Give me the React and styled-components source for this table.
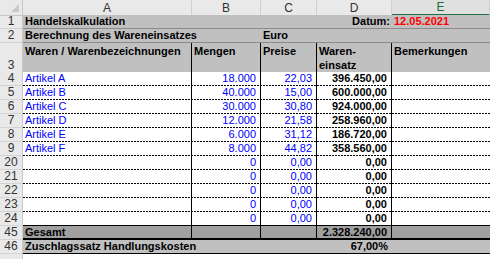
import React from 'react';
import styled, { createGlobalStyle } from 'styled-components';

const Global = createGlobalStyle`
  html, body { margin: 0; padding: 0; background: #fff; }
  body { font-family: "Liberation Sans", Arial, sans-serif; }
`

const COLS = '169px 69px 56px 75px 98px';

const Sheet = styled.div`
  display: flex;
  flex-direction: column;
  width: 490px;
  font-size: 11px;
  color: #000;
`
const HeadRow = styled.div`
  display: grid;
  grid-template-columns: 23px ${COLS};
  height: 15px;
  background: #e9e9e9;
`
const Corner = styled.div`
  position: relative;
  box-sizing: border-box;
  border-right: 1px solid #c8c8c8;
  border-bottom: 1px solid #c8c8c8;
  &::after {
    content: '';
    position: absolute;
    right: 3px;
    bottom: 3px;
    border-left: 8px solid transparent;
    border-bottom: 8px solid #c9c9c9;
  }
`
const ColHead = styled.div`
  box-sizing: border-box;
  display: flex;
  align-items: center;
  justify-content: center;
  font-size: 12px;
  color: ${p => p.$active ? '#1e6b41' : '#333'};
  background: ${p => p.$active ? '#e0e0e0' : 'transparent'};
  border-right: 1px solid #d0d0d0;
  border-bottom: ${p => p.$active ? '2px solid #217346' : '1px solid #c8c8c8'};
`
const Row = styled.div`
  display: grid;
  grid-template-columns: 23px 467px;
  height: ${p => p.$h || 14}px;
  overflow: hidden;
`
const RowNum = styled.div`
  box-sizing: border-box;
  display: flex;
  align-items: flex-end;
  justify-content: center;
  font-size: 12px;
  line-height: 13px;
  color: #333;
  background: #e9e9e9;
  border-right: 1px solid #c8c8c8;
  border-bottom: 1px solid #d4d4d4;
`

const lines = {
  gray: 'inset 0 -1px 0 #8c8c8c',
  solid: 'inset 0 -1px 0 #000',
  thick: 'inset 0 -2px 0 #000',
  none: 'none',
};

const Body = styled.div`
  display: grid;
  grid-template-columns: ${COLS};
  background-color: ${p => p.$fill || '#fff'};
  box-shadow: ${p => lines[p.$line] || 'none'};
  background-image: ${p => p.$line === 'dash'
    ? 'linear-gradient(to right, #000 2px, transparent 2px)'
    : 'none'};
  background-size: 3px 1px;
  background-repeat: repeat-x;
  background-position: left bottom;
  border-right: ${p => p.$edge ? '1px solid #000' : 'none'};
  width: ${p => p.$edge ? '468px' : '467px'};
  box-sizing: border-box;
`
const Cell = styled.div`
  box-sizing: border-box;
  display: flex;
  align-items: ${p => p.$top ? 'flex-start' : 'flex-end'};
  justify-content: ${p => p.$right ? 'flex-end' : 'flex-start'};
  padding: ${p => p.$top ? '1px' : '0'} ${p => p.$pr ?? (p.$right ? 4 : 2)}px 1px 2px;
  line-height: ${p => p.$top ? '14px' : '13px'};
  grid-column: span ${p => p.$span || 1};
  font-weight: ${p => p.$bold ? 'bold' : 'normal'};
  color: ${p => p.$color || '#000'};
  white-space: nowrap;
  border-right: ${p => p.$vline ? '1px solid #000' : 'none'};
`

const items = [
  ['4', 'Artikel A', '18.000', '22,03', '396.450,00'],
  ['5', 'Artikel B', '40.000', '15,00', '600.000,00'],
  ['6', 'Artikel C', '30.000', '30,80', '924.000,00'],
  ['7', 'Artikel D', '12.000', '21,58', '258.960,00'],
  ['8', 'Artikel E', '6.000', '31,12', '186.720,00'],
  ['9', 'Artikel F', '8.000', '44,82', '358.560,00'],
  ['20', '', '0', '0,00', '0,00'],
  ['21', '', '0', '0,00', '0,00'],
  ['22', '', '0', '0,00', '0,00'],
  ['23', '', '0', '0,00', '0,00'],
  ['24', '', '0', '0,00', '0,00'],
];

const BLUE = '#0000ff';

export default function App() {
  return (
    <Sheet>
      <Global />
      <HeadRow>
        <Corner />
        {['A', 'B', 'C', 'D', 'E'].map(c => (
          <ColHead key={c} $active={c === 'E'}>{c}</ColHead>
        ))}
      </HeadRow>

      <Row>
        <RowNum>1</RowNum>
        <Body $fill="#c0c0c0" $line="gray">
          <Cell $bold>Handelskalkulation</Cell>
          <Cell />
          <Cell />
          <Cell $bold $right $pr={2}>Datum:</Cell>
          <Cell $bold $color="#ff0000">12.05.2021</Cell>
        </Body>
      </Row>

      <Row>
        <RowNum>2</RowNum>
        <Body $fill="#c0c0c0" $line="gray">
          <Cell $bold $span={2}>Berechnung des Wareneinsatzes</Cell>
          <Cell $bold>Euro</Cell>
          <Cell />
          <Cell />
        </Body>
      </Row>

      <Row $h={29}>
        <RowNum>3</RowNum>
        <Body $fill="#c0c0c0" $line="solid" $edge>
          <Cell $bold $top $vline>Waren / Warenbezeichnungen</Cell>
          <Cell $bold $top $vline>Mengen</Cell>
          <Cell $bold $top $vline>Preise</Cell>
          <Cell $bold $top $vline>Waren-<br />einsatz</Cell>
          <Cell $bold $top>Bemerkungen</Cell>
        </Body>
      </Row>

      {items.map(([n, name, qty, price, sum], i) => (
        <Row key={n}>
          <RowNum>{n}</RowNum>
          <Body $line={i === items.length - 1 ? 'solid' : 'dash'} $edge>
            <Cell $vline $color={BLUE}>{name}</Cell>
            <Cell $vline $right $color={BLUE}>{qty}</Cell>
            <Cell $vline $right $color={BLUE}>{price}</Cell>
            <Cell $vline $right $bold>{sum}</Cell>
            <Cell />
          </Body>
        </Row>
      ))}

      <Row>
        <RowNum>45</RowNum>
        <Body $fill="#a0a0a0" $line="thick" $edge>
          <Cell $bold $vline>Gesamt</Cell>
          <Cell $vline />
          <Cell $vline />
          <Cell $bold $right $vline>2.328.240,00</Cell>
          <Cell />
        </Body>
      </Row>

      <Row>
        <RowNum>46</RowNum>
        <Body $fill="#c0c0c0" $line="solid" $edge>
          <Cell $bold $span={3}>Zuschlagssatz Handlungskosten</Cell>
          <Cell $bold $right>67,00%</Cell>
          <Cell />
        </Body>
      </Row>

      <Row>
        <RowNum />
        <Body />
      </Row>
    </Sheet>
  );
}
